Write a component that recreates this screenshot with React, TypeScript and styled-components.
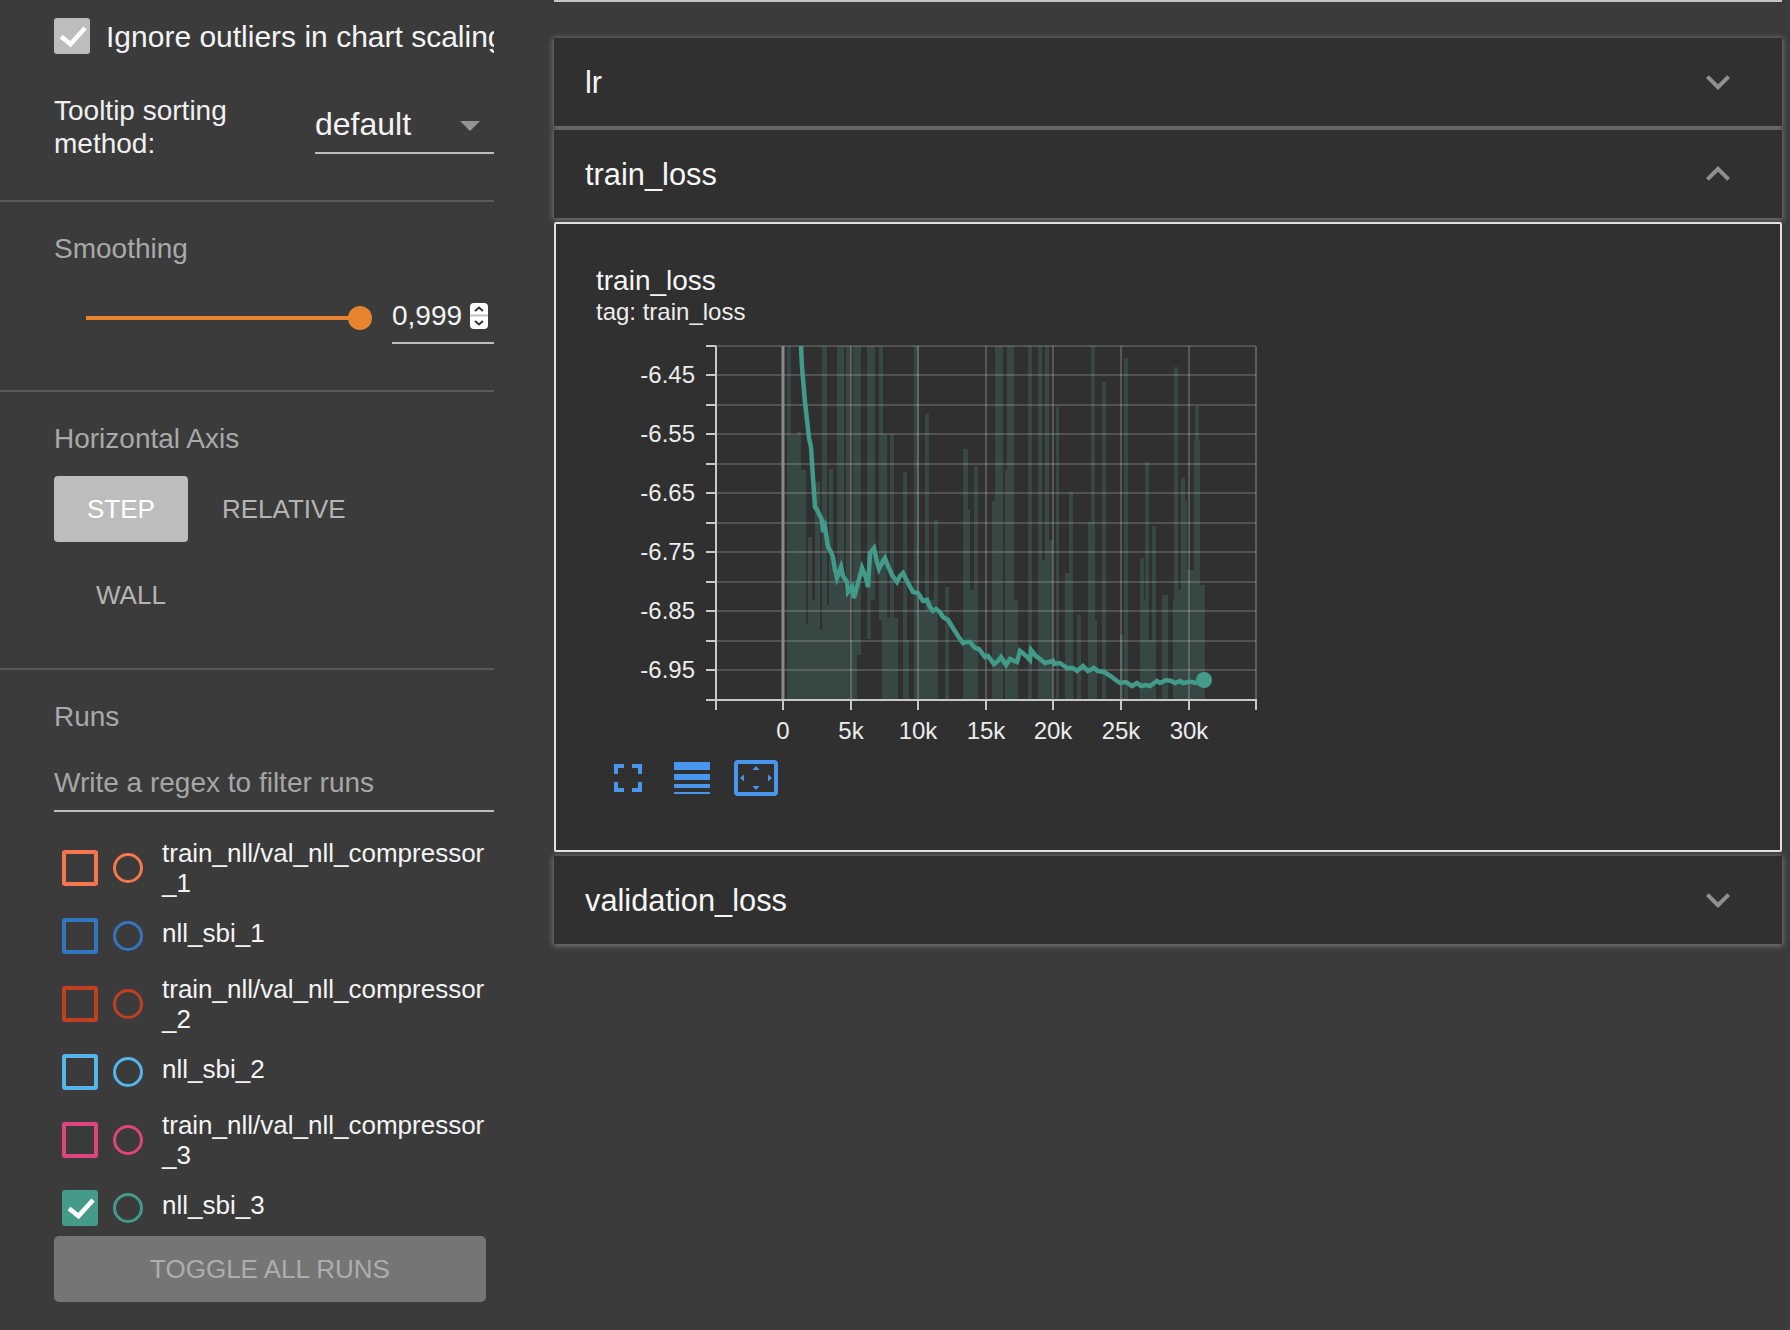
import React from "react";
import styled, { createGlobalStyle } from "styled-components";

const Global = createGlobalStyle`
  html, body { margin: 0; padding: 0; background: #3b3b3b; }
  body { font-family: "Liberation Sans", Arial, sans-serif; color: #f2f2f2; overflow: hidden; }
  * { box-sizing: border-box; }
`;

const Page = styled.div`
  display: flex;
  width: 1790px;
  height: 1330px;
  overflow: hidden;
`;

const Sidebar = styled.aside`
  width: 494px;
  flex: none;
  display: flex;
  flex-direction: column;
`;

const Section = styled.section<{ $top: number; $bottom: number; $last?: boolean }>`
  padding: ${(p) => p.$top}px 0 ${(p) => p.$bottom}px 54px;
  border-bottom: ${(p) => (p.$last ? "none" : "2px solid #5a5a5a")};
  display: flex;
  flex-direction: column;
`;

const CheckRow = styled.label`
  display: flex;
  align-items: center;
  height: 36px;
  overflow: hidden;
  white-space: nowrap;
`;

const Box = styled.span<{ $color: string; $filled?: boolean }>`
  width: 36px;
  height: 36px;
  flex: none;
  display: block;
  border-radius: 3px;
  border: 4px solid ${(p) => p.$color};
  background: ${(p) => (p.$filled ? p.$color : "transparent")};
  position: relative;
`;

const CheckMark = styled.svg`
  position: absolute;
  left: -4px;
  top: -4px;
  width: 36px;
  height: 36px;
`;

const CheckLabel = styled.span`
  font-size: 30px;
  line-height: 38px;
  margin-left: 16px;
  padding-top: 2px;
  color: #f4f4f4;
`;

const SortRow = styled.div`
  display: flex;
  margin-top: 40px;
  height: 66px;
`;

const SortLabel = styled.div`
  width: 261px;
  flex: none;
  font-size: 28px;
  line-height: 33px;
  color: #f0f0f0;
`;

const Select = styled.div`
  flex: 1;
  height: 60px;
  border-bottom: 2px solid #bdbdbd;
  display: flex;
  align-items: center;
  justify-content: space-between;
  font-size: 32px;
  padding: 3px 14px 0 0;
  color: #f4f4f4;
`;

const Caret = styled.span`
  width: 0;
  height: 0;
  margin-top: 3px;
  border-left: 10px solid transparent;
  border-right: 10px solid transparent;
  border-top: 10px solid #959595;
`;

const SectionTitle = styled.div`
  font-size: 28px;
  line-height: 34px;
  color: #a9a9a9;
`;

const SliderRow = styled.div`
  display: flex;
  margin-top: 24px;
  height: 54px;
`;

const Slider = styled.div`
  position: relative;
  margin: 16px 0 0 32px;
  width: 286px;
  height: 24px;
  flex: none;
  &::before {
    content: "";
    position: absolute;
    left: 0;
    top: 10px;
    width: 274px;
    height: 4px;
    background: #e8832f;
  }
`;

const Knob = styled.span`
  position: absolute;
  right: 0;
  top: 0;
  width: 24px;
  height: 24px;
  border-radius: 50%;
  background: #e8832f;
`;

const NumberField = styled.div`
  margin-left: 20px;
  flex: 1;
  height: 54px;
  border-bottom: 2px solid #bdbdbd;
  display: flex;
  align-items: center;
  justify-content: space-between;
  padding-right: 6px;
  font-size: 28px;
  color: #f4f4f4;
`;

const Toggles = styled.div`
  display: flex;
  flex-wrap: wrap;
  margin-top: 20px;
  row-gap: 20px;
`;

const Toggle = styled.button<{ $active?: boolean; $pad: number }>`
  height: 66px;
  border: none;
  border-radius: 4px;
  font: inherit;
  font-size: 26px;
  padding: 0 ${(p) => p.$pad}px;
  background: ${(p) => (p.$active ? "#bdbdbd" : "transparent")};
  color: ${(p) => (p.$active ? "#ffffff" : "#b4b4b4")};
`;

const Filter = styled.div`
  margin-top: 23px;
  height: 55px;
  border-bottom: 2px solid #bdbdbd;
  font-size: 28px;
  line-height: 52px;
  color: #a6a6a6;
`;

const RunList = styled.ul`
  list-style: none;
  margin: 16px 0 0;
  padding: 0;
`;

const Run = styled.li<{ $double: boolean }>`
  height: ${(p) => (p.$double ? 80 : 56)}px;
  display: flex;
  align-items: center;
  padding-left: 8px;
`;

const Ring = styled.span<{ $color: string }>`
  width: 30px;
  height: 30px;
  flex: none;
  margin-left: 15px;
  border-radius: 50%;
  border: 3.5px solid ${(p) => p.$color};
`;

const RunName = styled.span<{ $double: boolean }>`
  margin-left: 19px;
  width: 332px;
  font-size: 26px;
  line-height: 30px;
  word-break: break-all;
  color: #f4f4f4;
  padding: ${(p) => (p.$double ? "0" : "0 0 6px")};
`;

const ToggleAll = styled.button`
  width: 432px;
  height: 66px;
  border: none;
  border-radius: 5px;
  background: #757575;
  color: #adadad;
  font: inherit;
  font-size: 26px;
`;

const Main = styled.main`
  margin-left: 60px;
  width: 1228px;
  flex: none;
  display: flex;
  flex-direction: column;
`;

const TopRule = styled.div`
  height: 2px;
  background: #c4c4c4;
  margin-bottom: 36px;
`;

const Panel = styled.div`
  height: 88px;
  margin-bottom: 4px;
  background: #303030;
  box-shadow: 0 1px 6px 1px rgba(255, 255, 255, 0.3);
  display: flex;
  align-items: center;
  justify-content: space-between;
  padding: 0 40px 0 31px;
  color: #f6f6f6;
  position: relative;
`;

const PanelTitle = styled.span`
  font-size: 30.8px;
  padding-top: 2px;
`;

const ChevronIcon = styled.svg`
  width: 48px;
  height: 48px;
  fill: #8f8f8f;
`;

const Card = styled.div`
  height: 630px;
  margin: 0 0 4px;
  border: 2px solid #e2e2e2;
  border-radius: 2px;
  background: #303030;
  padding: 40px 0 0 40px;
  position: relative;
`;

const CardTitle = styled.div`
  font-size: 28px;
  line-height: 34px;
  color: #f6f6f6;
`;

const CardTag = styled.div`
  font-size: 24px;
  line-height: 28px;
  color: #eeeeee;
`;

const ChartSvg = styled.svg`
  display: block;
  margin-top: 14px;
`;

const Tools = styled.div`
  display: flex;
  align-items: center;
  margin: 10px 0 0 18px;
`;

const ToolIcon = styled.svg<{ $gap: number }>`
  display: block;
  flex: none;
  margin-right: ${(p) => p.$gap}px;
  fill: #4896ee;
`;

const AxisText = styled.text<{ $anchor: string }>`
  font-size: 24px;
  fill: #ececec;
  text-anchor: ${(p) => p.$anchor};
  dominant-baseline: central;
`;

const runs = [
  { name: "train_nll/val_nll_compressor_1", color: "#f4774d", double: true },
  { name: "nll_sbi_1", color: "#3476bd", double: false },
  { name: "train_nll/val_nll_compressor_2", color: "#bf4021", double: true },
  { name: "nll_sbi_2", color: "#55b5ec", double: false },
  { name: "train_nll/val_nll_compressor_3", color: "#de4480", double: true },
  { name: "nll_sbi_3", color: "#459a8a", double: false, checked: true },
];

const bars: number[][] = [
  [787,791,346],[791,797,435],[797,801,432],[801,806,470],[806,808,624],[808,812,537],[812,815,600],
  [815,820,482],[820,822,630],[822,827,346],[827,829,605],[829,833,469],[833,837,575],[837,844,346],
  [844,846,590],[846,851,346],[851,853,640],[853,857,346],[857,861,346,655],[867,871,346,639],[871,875,346,600],
  [879,883,346,620],[882,887,434],[887,890,618],[890,894,434],[894,898,618],[903,907,472],[907,909,640],
  [914,919,346],[919,925,610],[925,929,414],[929,934,600],[934,938,520],[945,949,587],[963,968,449],
  [968,970,510],[970,974,590],[974,978,466],[992,995,501],[995,1003,346],[1005,1007,470],[1007,1014,346],
  [1014,1018,600],[1028,1032,346],[1038,1042,346],[1042,1045,560],[1045,1049,346],[1049,1053,540],[1056,1059,407],
  [1065,1069,573],[1069,1073,492],[1077,1081,615],[1088,1091,522],[1091,1095,346],[1095,1097,620],[1102,1106,382],
  [1120,1123,635],[1124,1128,358],[1140,1144,558],[1144,1145,600],[1145,1149,462],[1149,1152,640],[1152,1156,526],
  [1162,1168,595],[1173,1174,600],[1174,1178,367],[1178,1181,590],[1181,1185,478],[1185,1187,500],[1187,1194,570],
  [1194,1200,440],[1195,1199,406],[1200,1205,585],
];

const linePts = [
  [801,346],[802,367],[805,402],[809,438],[811,447],[813,478],[815,507],[817,510],[820,516],[822,520],[823,532],[825,527],
  [828,547],[831,552],[833,557],[835,570],[837,578],[841,567],[843,576],[847,582],[848,592],[852,587],[854,598],[858,583],
  [862,568],[866,578],[868,587],[870,553],[874,548],[877,562],[879,569],[883,561],[885,558],[888,566],[892,575],[897,582],
  [900,576],[903,573],[907,581],[913,592],[918,593],[923,601],[927,600],[930,607],[933,611],[936,609],[940,612],[943,617],
  [948,620],[953,628],[958,636],[963,643],[966,642],[970,642],[975,648],[979,649],[985,657],[988,656],[994,664],[998,661],
  [1001,657],[1006,665],[1010,659],[1014,661],[1017,662],[1020,651],[1025,655],[1030,660],[1031,650],[1036,656],[1040,659],
  [1045,663],[1049,662],[1053,661],[1054,664],[1060,663],[1067,668],[1073,668],[1077,671],[1083,666],[1088,671],[1094,668],
  [1098,671],[1104,672],[1112,677],[1117,681],[1120,683],[1126,682],[1132,686],[1137,683],[1141,686],[1146,685],[1150,686],
  [1154,683],[1157,681],[1160,683],[1166,680],[1171,681],[1175,683],[1180,681],[1183,683],[1188,682],[1192,682],[1196,683],[1204,680],
];

const gridY = [346, 375, 405, 434, 464, 493, 523, 552, 582, 611, 641, 670];
const yLabels: [number, string][] = [[374,"-6.45"],[433,"-6.55"],[492,"-6.65"],[551,"-6.75"],[610,"-6.85"],[669,"-6.95"]];
const xLabels: [number, string][] = [[783,"0"],[851,"5k"],[918,"10k"],[986,"15k"],[1053,"20k"],[1121,"25k"],[1189,"30k"]];

const barPath = bars
  .map(([a, b, t, e = 700]) => `M${a} ${t}H${b}V${e}H${a}Z`)
  .join("");

function Chart() {
  return (
    <ChartSvg width={680} height={410} viewBox="596 340 680 410">
      <path d={barPath} fill="#374844" />
      {gridY.map((y) => (
        <line key={y} x1={716} x2={1256} y1={y} y2={y} stroke="rgba(255,255,255,0.22)" strokeWidth={1.6} />
      ))}
      {xLabels.slice(1).map(([x]) => (
        <line key={x} x1={x} x2={x} y1={346} y2={700} stroke="rgba(255,255,255,0.24)" strokeWidth={1.6} />
      ))}
      <line x1={1256} x2={1256} y1={346} y2={700} stroke="rgba(255,255,255,0.28)" strokeWidth={1.6} />
      <line x1={783} x2={783} y1={346} y2={700} stroke="#8a8a8a" strokeWidth={3} />
      <polyline points={linePts.map((p) => p.join(",")).join(" ")} fill="none" stroke="#429b89" strokeWidth={4.5} strokeLinejoin="miter" />
      <circle cx={1204} cy={680} r={8} fill="#429b89" />
      <line x1={716} x2={716} y1={346} y2={701} stroke="#c8c8c8" strokeWidth={2} />
      <line x1={706} x2={1257} y1={700} y2={700} stroke="#c8c8c8" strokeWidth={2} />
      {gridY.map((y) => (
        <line key={y} x1={706} x2={716} y1={y} y2={y} stroke="#c8c8c8" strokeWidth={2} />
      ))}
      {[716, 1256, ...xLabels.map((l) => l[0])].map((x) => (
        <line key={x} x1={x} x2={x} y1={700} y2={710} stroke="#c8c8c8" strokeWidth={2} />
      ))}
      {yLabels.map(([y, t]) => (
        <AxisText key={t} $anchor="end" x={695} y={y}>{t}</AxisText>
      ))}
      {xLabels.map(([x, t]) => (
        <AxisText key={t} $anchor="middle" x={x} y={730}>{t}</AxisText>
      ))}
    </ChartSvg>
  );
}

const Down = () => (
  <ChevronIcon viewBox="0 0 24 24"><path d="M16.59 8.59L12 13.17 7.41 8.59 6 10l6 6 6-6z" /></ChevronIcon>
);
const Up = () => (
  <ChevronIcon viewBox="0 0 24 24"><path d="M12 8l-6 6 1.41 1.41L12 10.83l4.59 4.58L18 14z" /></ChevronIcon>
);

const Check = () => (
  <CheckMark viewBox="0 0 36 36">
    <path d="M7 18.5L16.5 26L31 10" fill="none" stroke="#fff" strokeWidth={4.6} />
  </CheckMark>
);

export default function App() {
  return (
    <Page>
      <Global />
      <Sidebar>
        <Section $top={18} $bottom={40}>
          <CheckRow>
            <Box $color="#bdbdbd" $filled><Check /></Box>
            <CheckLabel>Ignore outliers in chart scaling</CheckLabel>
          </CheckRow>
          <SortRow>
            <SortLabel>Tooltip sorting method:</SortLabel>
            <Select>default<Caret /></Select>
          </SortRow>
        </Section>
        <Section $top={30} $bottom={46}>
          <SectionTitle>Smoothing</SectionTitle>
          <SliderRow>
            <Slider><Knob /></Slider>
            <NumberField>
              0,999
              <svg width={18} height={26} viewBox="0 0 18 26">
                <rect width={18} height={26} rx={4} fill="#fff" />
                <rect y={11.5} width={18} height={2} fill="#c4c4c4" />
                <path d="M5 8L9 4.5L13 8M5 18L9 21.5L13 18" fill="none" stroke="#333" strokeWidth={2} />
              </svg>
            </NumberField>
          </SliderRow>
        </Section>
        <Section $top={30} $bottom={40}>
          <SectionTitle>Horizontal Axis</SectionTitle>
          <Toggles>
            <Toggle $active $pad={33}>STEP</Toggle>
            <Toggle $pad={34}>RELATIVE</Toggle>
            <Toggle $pad={42}>WALL</Toggle>
          </Toggles>
        </Section>
        <Section $top={30} $bottom={0} $last>
          <SectionTitle>Runs</SectionTitle>
          <Filter>Write a regex to filter runs</Filter>
          <RunList>
            {runs.map((r) => (
              <Run key={r.name} $double={r.double}>
                <Box $color={r.color} $filled={r.checked}>{r.checked && <Check />}</Box>
                <Ring $color={r.color} />
                <RunName $double={r.double}>{r.name}</RunName>
              </Run>
            ))}
          </RunList>
          <ToggleAll>TOGGLE ALL RUNS</ToggleAll>
        </Section>
      </Sidebar>
      <Main>
        <TopRule />
        <Panel><PanelTitle>lr</PanelTitle><Down /></Panel>
        <Panel><PanelTitle>train_loss</PanelTitle><Up /></Panel>
        <Card>
          <CardTitle>train_loss</CardTitle>
          <CardTag>tag: train_loss</CardTag>
          <Chart />
          <Tools>
            <ToolIcon $gap={32} width={28} height={28} viewBox="0 0 28 28">
              <path d="M0 0H10V4H4V10H0ZM18 0H28V10H24V4H18ZM0 18H4V24H10V28H0ZM24 18H28V28H18V24H24Z" />
            </ToolIcon>
            <ToolIcon $gap={24} width={36} height={32} viewBox="0 0 36 32">
              <path d="M0 0H36V8H0ZM0 12H36V18H0ZM0 22H36V26H0ZM0 30H36V32H0Z" />
            </ToolIcon>
            <ToolIcon $gap={0} width={44} height={36} viewBox="0 0 44 36">
              <rect x={2} y={2} width={40} height={32} rx={2} fill="none" stroke="#4896ee" strokeWidth={4} />
              <path d="M18.5 10L22 6L25.5 10ZM18.5 26L22 30L25.5 26ZM10 14.5L6 18L10 21.5ZM34 14.5L38 18L34 21.5Z" />
            </ToolIcon>
          </Tools>
        </Card>
        <Panel><PanelTitle>validation_loss</PanelTitle><Down /></Panel>
      </Main>
    </Page>
  );
}
